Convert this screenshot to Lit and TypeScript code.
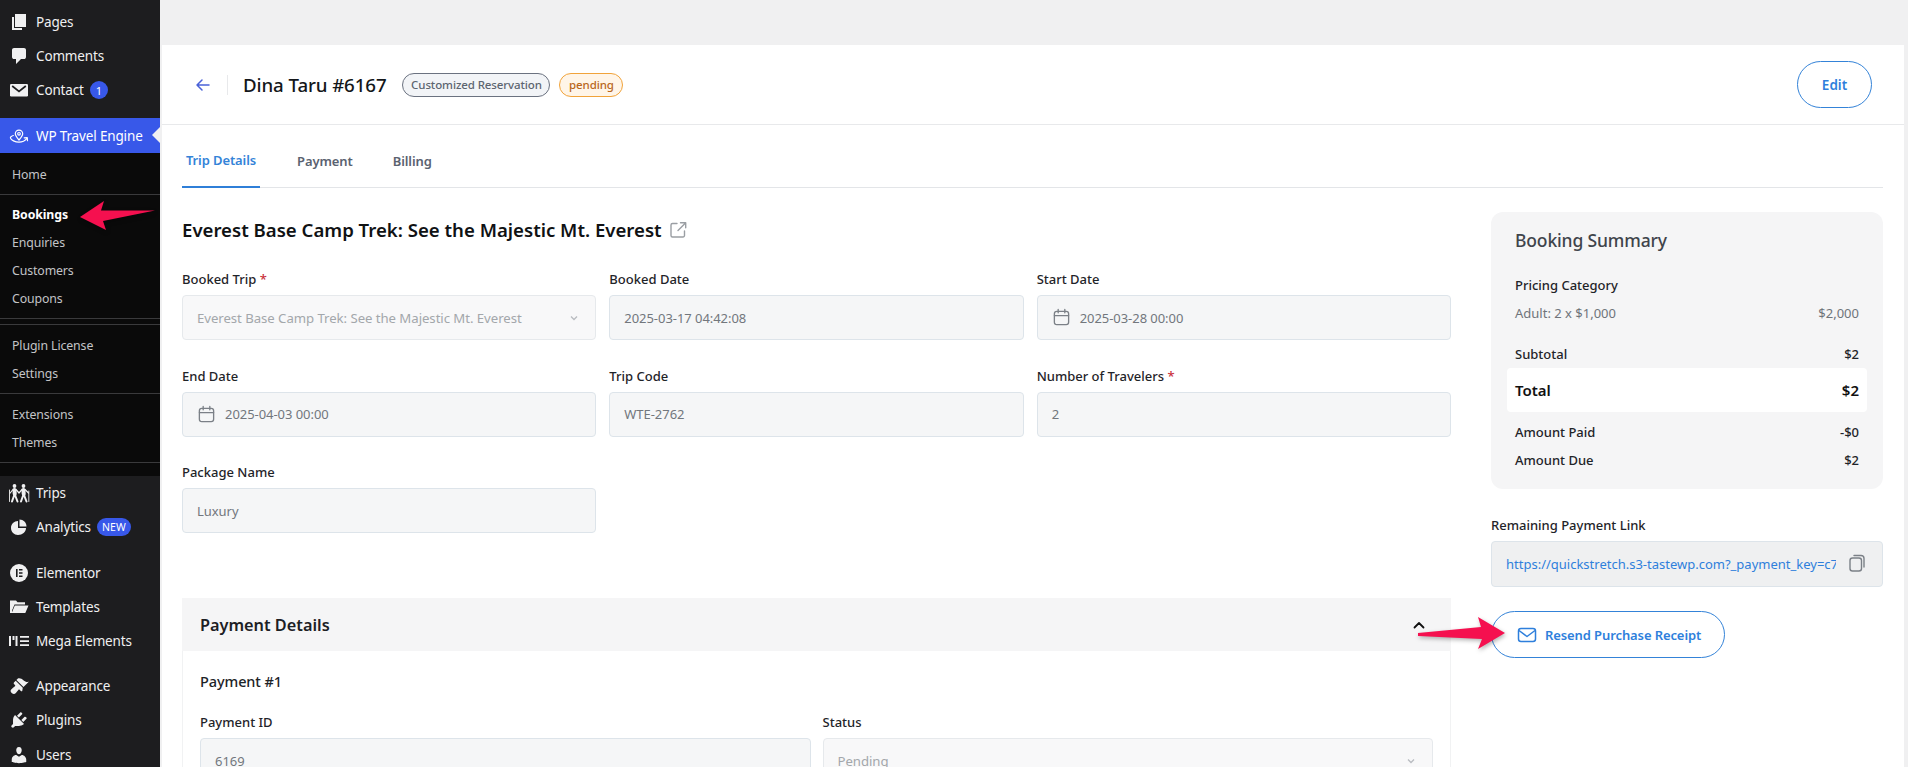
import { LitElement, html, css, svg } from "lit";
import { customElement } from "lit/decorators.js";

const ic = (d: string) => html`<svg class="wp" viewBox="0 0 20 20"><path fill="currentColor" d=${d}></path></svg>`;
const I = {
  pages: ic("M6 15V2h11v13H6zm-1 1h8v2H3V5h2v11z"),
  comments: ic("M5 2h10q.82 0 1.41.59T17 4v7q0 .82-.59 1.41T15 13h-3l-5 5v-5H5q-.82 0-1.41-.59T3 11V4q0-.82.59-1.41T5 2z"),
  mail: html`<svg class="wp" viewBox="0 0 20 20"><rect x="1" y="4" width="18" height="12.5" rx="1.2" fill="currentColor"></rect><path d="M3.2 6l6.8 5.4L16.8 6" fill="none" stroke="#1d1d1f" stroke-width="1.7"></path></svg>`,
  wte: html`<svg class="wp wte" viewBox="0 0 20 20" fill="none" stroke="currentColor" stroke-width="1.2" stroke-linecap="round" stroke-linejoin="round"><path d="M10 14c-2.200-2.500-3.700-4.200-3.700-6.200a3.700 3.700 0 017.400 0c0 2-1.500 3.700-3.700 6.200z"></path><circle cx="10" cy="7.800" r="1.300"></circle><path d="M4.300 9.500c-2 .8-3.300 1.500-2.800 2.600.7 2 4.500 4 8.500 4 3 0 6-1.300 8-3.800"></path><path d="M15.200 11.800l3-.2.300 3"></path></svg>`,
  trips: html`<svg class="wp trips" viewBox="0 0 22 20" fill="none" stroke="currentColor" stroke-linecap="round" stroke-linejoin="round"><circle cx="6.500" cy="3" r="1.900" fill="currentColor" stroke="none"></circle><circle cx="15.500" cy="3" r="1.900" fill="currentColor" stroke="none"></circle><path stroke-width="4" d="M6.500 7l.2 4M15.500 7l.2 4"></path><path stroke-width="2" d="M6.300 12l-2.300 6.500M7 12l2.500 6.500M15.300 12l-2.300 6.500M16 12l2.500 6.500"></path><path stroke-width="1.200" d="M5 6.500L2.200 10M8 6.500l3 3.500M14 6.500l-3 3.500M17 6.500l3.500 3.500"></path><path stroke-width=".9" d="M1.500 7V18.500M20.800 8V18.500"></path></svg>`,
  pie: ic("M10.500 9.500V2.500c3.870 0 7 3.130 7 7h-7zM9 4v7h8c0 3.870-3.630 7-8 7-3.870 0-7-3.130-7-7s3.130-7 7-7z"),
  elementor: html`<svg class="wp" viewBox="0 0 20 20"><circle cx="10" cy="10" r="9" fill="currentColor"></circle><path fill="#1d1d1f" d="M7 6h1.600v8H7zM10 6h3.500v1.500H10zM10 9.200h3.500v1.600H10zM10 12.500h3.500V14H10z"></path></svg>`,
  folder: ic("M1 3.500h6l1.500 1.800h7.500v2.200H5.500L3 13.500V16H1zM5.800 8.500H19.500l-3.200 7.500H2.700z"),
  mega: html`<svg class="wp mega" viewBox="0 0 22 14"><path fill="currentColor" d="M1 2h2v10H1zM4.500 2H6.500v4H4.500zM7.500 2H9.500v10H7.500zM12 2h9v1.800h-9zM12 6.200h9V8h-9zM12 10.200h9V12h-9z"></path></svg>`,
  brush: ic("M14.480 11.060L7.410 3.990l1.500-1.500c.5-.56 2.300-.47 3.510.32 1.210.8 1.430 1.280 2.910 2.100 1.180.64 2.450 1.260 4.450.85zm-.71.71L6.700 4.700 4.930 6.470c-.39.39-.39 1.020 0 1.410l1.060 1.060c.39.39.39 1.030 0 1.420-.6.6-1.430 1.110-2.210 1.690-.35.26-.7.53-1.010.84C1.430 13.710.96 15.180 2.670 16.890s3.180 1.230 4.170.23c.31-.31.58-.66.84-1.010.58-.78 1.090-1.610 1.690-2.210.39-.39 1.030-.39 1.420 0l1.060 1.060c.39.39 1.020.39 1.410 0z"),
  plug: ic("M13.110 4.360L9.870 7.600 8 5.730l3.240-3.240c.35-.34 1.050-.2 1.560.32.52.51.66 1.210.31 1.550zm-8 1.770l.91-1.120 9.010 9.010-1.190.84c-.71.71-2.630 1.160-3.820 1.160H6.140L4.900 17.260c-.59.59-1.540.59-2.120 0-.59-.58-.59-1.530 0-2.120l1.240-1.240v-3.880c0-1.130.4-3.190 1.090-3.890zm7.260 3.970l3.240-3.240c.34-.35 1.040-.21 1.550.31.52.51.66 1.210.31 1.550l-3.240 3.250z"),
  users: ic("M10 9.250c-2.270 0-2.730-3.440-2.730-3.440C7 4.020 7.820 2 9.970 2c2.160 0 2.980 2.020 2.710 3.810 0 0-.41 3.440-2.680 3.440zm0 2.570L12.720 10c2.390 0 4.520 2.330 4.520 4.530v2.490s-3.650 1.130-7.240 1.130c-3.650 0-7.240-1.130-7.240-1.130v-2.490c0-2.250 1.940-4.480 4.470-4.480z"),
};

const calendar = html`<svg class="cal" viewBox="0 0 20 20" fill="none" stroke="#7b8087" stroke-width="1.400" stroke-linecap="round" stroke-linejoin="round"><rect x="2.500" y="3.500" width="15" height="14" rx="2.500"></rect><path d="M2.500 8h15M6.500 1.500v3.500M13.500 1.500v3.500"></path></svg>`;
const chevDown = html`<svg class="chev" viewBox="0 0 12 12" fill="none" stroke="#b9bcc0" stroke-width="1.300"><path d="M3 4.500l3 3 3-3"></path></svg>`;

@customElement("app-root")
export class AppRoot extends LitElement {
  static styles = css`
    :host { display: block; height: 767px; overflow: hidden; position: relative; font-family: "Noto Sans", "Open Sans", sans-serif; background: #f0f0f1; color: #1d2327; }
    * { box-sizing: border-box; }
    .page { display: grid; grid-template-columns: 160px 1fr; height: 767px; }

    .side { background: #1d1d1f; color: #f0f0f1; padding-top: 5px; font-size: 13.500px; letter-spacing: -0.15px; overflow: hidden; }
    .row { display: flex; align-items: center; height: 34px; position: relative; }
    .row .ico { width: 36px; flex: none; display: flex; justify-content: center; padding-left: 1px; }
    .wp { width: 20px; height: 20px; display: block; }
    .wp.trips { width: 22px; }
    .wp.mega { width: 22px; height: 14px; }
    .gap-t { margin-top: 11px; }
    .gap-e { margin-top: 12px; }
    .gap-u { margin-top: 1px; }
    .active { background: #3858e9; color: #fff; height: 35px; }
    .active::after { content: ""; position: absolute; right: 0; top: 9px; border: 8.500px solid transparent; border-right-color: #f0f0f1; border-left-width: 0; }
    .badge { margin-left: 6px; width: 18px; height: 18px; border-radius: 50%; background: #3858e9; color: #fff; font-size: 11px; display: flex; align-items: center; justify-content: center; }
    .new { margin-left: 6px; width: 34px; height: 18px; border-radius: 9px; background: #3858e9; color: #fff; font-size: 10.500px; display: flex; align-items: center; justify-content: center; letter-spacing: 0; }
    .sub { background: #0a0a0a; height: 323px; padding-top: 7px; font-size: 12.300px; color: #c3c4c7; letter-spacing: -0.1px; }
    .sub a { display: flex; align-items: center; height: 28px; padding-left: 12px; }
    .sub a.cur { color: #fff; font-weight: 700; }
    .sub hr { border: 0; height: 1px; background: #3a3a3c; margin: 6px 0; }
    .sub hr.a { margin: 6px 0 5px; }
    .sub hr.c { margin: 0 0 6px; }

    .main { padding: 45px 4px 0 2px; min-width: 0; }
    .panel { background: #fff; height: 722px; overflow: hidden; }
    .head { height: 80px; border-bottom: 1px solid #e8e9eb; display: flex; align-items: center; padding: 0 32px 0 33px; }
    .back { width: 16px; height: 16px; color: #4a62d8; display: block; }
    .vr { width: 1px; height: 20px; background: #e8e9eb; margin: 0 15px 0 16px; }
    h1 { font-size: 18.700px; font-weight: 500; margin: 0; color: #14171a; letter-spacing: -0.1px; }
    .pill { height: 24px; border-radius: 12px; font-size: 11.500px; font-weight: 500; display: flex; align-items: center; justify-content: center; letter-spacing: -0.1px; }
    .pill.grey { width: 148px; margin-left: 16px; background: #f2f4f7; border: 1px solid #6b7280; color: #5c6570; }
    .pill.orange { width: 64px; margin-left: 9px; background: #fff5e8; border: 1px solid #f1a33a; color: #b9661b; font-weight: 500; }
    .edit { margin-left: auto; width: 75px; height: 47px; border-radius: 24px; border: 1px solid #3483d8; color: #2e7fdc; font-size: 13.500px; font-weight: 600; display: flex; align-items: center; justify-content: center; }

    .tabs { margin: 0 21px 0 20px; height: 63px; border-bottom: 1px solid #e3e5e8; display: flex; }
    .tab { font-size: 13px; font-weight: 600; color: #5a6270; height: 63px; padding-top: 8px; display: flex; align-items: center; letter-spacing: -0.1px; }
    .tab.on { color: #3483d8; width: 78px; justify-content: center; border-bottom: 2px solid #2f7fd8; margin-right: 37px; }
    .tab.pay { margin-right: 40px; }

    .body { display: grid; grid-template-columns: 1269px 392px; column-gap: 40px; padding-left: 20px; }
    .left { padding-top: 30px; }
    h2 { font-size: 18.600px; line-height: 24px; font-weight: 600; margin: 0 0 27px; color: #101214; display: flex; align-items: center; }
    h2 svg { width: 18px; height: 18px; margin-left: 7px; }
    .form { display: grid; grid-template-columns: repeat(3, 1fr); column-gap: 13px; row-gap: 25.500px; }
    .f label { display: block; height: 20px; line-height: 20px; margin-bottom: 6px; font-size: 13px; font-weight: 500; color: #1f2429; }
    .req { color: #c9303a; }
    .in { height: 45px; background: #f5f6f7; border: 1px solid #dde4ea; border-radius: 4px; display: flex; align-items: center; padding: 0 14px; font-size: 13px; color: #72777d; letter-spacing: -0.05px; }
    .in.sel { background: #f8f8f9; color: #a3a7ab; font-size: 13.200px; border-color: #e6e9ec; }
    .in .chev { margin-left: auto; width: 12px; height: 12px; margin-right: 1px; }
    .cal { width: 19px; height: 19px; margin-right: 9px; flex: none; }

    .acc { margin-top: 65px; border: 1px solid #f1f2f3; border-top: 0; }
    .acc-h { height: 53px; background: #f5f5f6; margin: 0 -1px; padding: 0 24px 0 18px; display: flex; align-items: center; justify-content: space-between; font-size: 16.300px; font-weight: 600; color: #1c2024; }
    .acc-h svg { width: 16px; height: 16px; }
    .acc-b { padding: 19px 17px 0; }
    h3 { font-size: 14.500px; line-height: 22px; font-weight: 500; margin: 0 0 20px; letter-spacing: -0.1px; }
    .two { display: grid; grid-template-columns: 1fr 1fr; column-gap: 12px; }

    .right { padding-top: 24px; }
    .sum { background: #f5f5f6; border-radius: 12px; padding: 16px 24px 19px; font-size: 13px; }
    .sum h4 { font-size: 17.500px; line-height: 24px; font-weight: 500; color: #3f444b; margin: 0 0 23px; letter-spacing: -0.15px; }
    .line { display: flex; justify-content: space-between; align-items: center; height: 20px; font-weight: 500; color: #1f2429; }
    .line.pc { display: block; line-height: 20px; font-weight: 500; margin-bottom: 8px; }
    .line.ad { color: #6f747a; font-weight: 400; margin-bottom: 21px; }
    .line.tot { height: 44px; background: #fff; border-radius: 4px; margin: 4px -8px 10px; padding: 0 8px; font-size: 15px; font-weight: 600; color: #111; }
    .line.pd { margin-bottom: 8px; }
    .rp { margin-top: 26px; height: 20px; line-height: 20px; margin-bottom: 6px; font-size: 13px; font-weight: 500; color: #1f2429; }
    .link { height: 46px; background: #eff0f1; border: 1px solid #dde4ea; border-radius: 4px; display: flex; align-items: center; padding: 0 16px 0 14px; }
    .link span { flex: 1; overflow: hidden; white-space: nowrap; color: #2e7fdc; font-size: 13px; margin-right: 12px; }
    .link svg { width: 18px; height: 18px; flex: none; margin-top: -2px; }
    .resend { margin-top: 24px; width: 234px; height: 47px; border: 1px solid #3483d8; border-radius: 24px; display: flex; align-items: center; padding-left: 25px; gap: 8px; color: #2e7fdc; font-size: 13px; font-weight: 600; letter-spacing: -0.1px; }
    .resend svg { width: 20px; height: 20px; }

    .arrows { position: absolute; left: 0; top: 0; width: 1908px; height: 767px; pointer-events: none; filter: drop-shadow(1px 2px 2px rgba(0,0,0,.3)); }
  `;

  field(label: string, val: unknown, opts: { req?: boolean; sel?: boolean; cal?: boolean } = {}) {
    return html`<div class="f"><label>${label}${opts.req ? html` <span class="req">*</span>` : ""}</label>
      <div class="in ${opts.sel ? "sel" : ""}">${opts.cal ? calendar : ""}${val}${opts.sel ? chevDown : ""}</div></div>`;
  }

  render() {
    return html`<div class="page">
      <nav class="side">
        <div class="row"><div class="ico">${I.pages}</div>Pages</div>
        <div class="row"><div class="ico">${I.comments}</div>Comments</div>
        <div class="row"><div class="ico">${I.mail}</div>Contact<span class="badge">1</span></div>
        <div class="row active gap-t"><div class="ico">${I.wte}</div>WP Travel Engine</div>
        <div class="sub">
          <a>Home</a><hr class="a" />
          <a class="cur">Bookings</a><a>Enquiries</a><a>Customers</a><a>Coupons</a>
          <hr class="a" /><hr class="c" />
          <a>Plugin License</a><a>Settings</a><hr />
          <a>Extensions</a><a>Themes</a><hr />
        </div>
        <div class="row"><div class="ico">${I.trips}</div>Trips</div>
        <div class="row"><div class="ico">${I.pie}</div>Analytics<span class="new">NEW</span></div>
        <div class="row gap-e"><div class="ico">${I.elementor}</div>Elementor</div>
        <div class="row"><div class="ico">${I.folder}</div>Templates</div>
        <div class="row"><div class="ico">${I.mega}</div>Mega Elements</div>
        <div class="row gap-t"><div class="ico">${I.brush}</div>Appearance</div>
        <div class="row"><div class="ico">${I.plug}</div>Plugins</div>
        <div class="row gap-u"><div class="ico">${I.users}</div>Users</div>
      </nav>
      <main class="main"><div class="panel">
        <header class="head">
          <svg class="back" viewBox="0 0 16 16" fill="none" stroke="currentColor" stroke-width="1.500" stroke-linecap="round" stroke-linejoin="round"><path d="M14 8H2.500M7 3L2 8l5 5"></path></svg>
          <span class="vr"></span>
          <h1>Dina Taru #6167</h1>
          <span class="pill grey">Customized Reservation</span>
          <span class="pill orange">pending</span>
          <span class="edit">Edit</span>
        </header>
        <div class="tabs">
          <span class="tab on">Trip Details</span><span class="tab pay">Payment</span><span class="tab">Billing</span>
        </div>
        <div class="body">
          <div class="left">
            <h2>Everest Base Camp Trek: See the Majestic Mt. Everest
              <svg viewBox="0 0 18 18" fill="none" stroke="#9a9ea3" stroke-width="1.400" stroke-linecap="round" stroke-linejoin="round"><path d="M8 2.500H3.500a1.500 1.500 0 00-1.500 1.500v10.500A1.500 1.500 0 003.500 16H14a1.500 1.500 0 001.500-1.500V10M9 9.500L16.500 2M11.500 1.700h5.200v5"></path></svg></h2>
            <div class="form">
              ${this.field("Booked Trip", "Everest Base Camp Trek: See the Majestic Mt. Everest", { req: true, sel: true })}
              ${this.field("Booked Date", "2025-03-17 04:42:08")}
              ${this.field("Start Date", "2025-03-28 00:00", { cal: true })}
              ${this.field("End Date", "2025-04-03 00:00", { cal: true })}
              ${this.field("Trip Code", "WTE-2762")}
              ${this.field("Number of Travelers", "2", { req: true })}
              ${this.field("Package Name", "Luxury")}
            </div>
            <section class="acc">
              <div class="acc-h">Payment Details
                <svg viewBox="0 0 16 16" fill="none" stroke="#111" stroke-width="1.800" stroke-linecap="round" stroke-linejoin="round"><path d="M3.500 10.500L8 6l4.500 4.500"></path></svg>
              </div>
              <div class="acc-b">
                <h3>Payment #1</h3>
                <div class="two">
                  ${this.field("Payment ID", "6169")}
                  ${this.field("Status", "Pending", { sel: true })}
                </div>
              </div>
            </section>
          </div>
          <aside class="right">
            <div class="sum">
              <h4>Booking Summary</h4>
              <div class="line pc">Pricing Category</div>
              <div class="line ad"><span>Adult: 2 x $1,000</span><span>$2,000</span></div>
              <div class="line"><span>Subtotal</span><span>$2</span></div>
              <div class="line tot"><span>Total</span><span>$2</span></div>
              <div class="line pd"><span>Amount Paid</span><span>-$0</span></div>
              <div class="line"><span>Amount Due</span><span>$2</span></div>
            </div>
            <div class="rp">Remaining Payment Link</div>
            <div class="link"><span>https://quickstretch.s3-tastewp.com?_payment_key=c7a91f3e</span>
              <svg viewBox="0 0 18 18" fill="none" stroke="#7b8087" stroke-width="1.400" stroke-linejoin="round"><rect x="2" y="4" width="11.500" height="13" rx="2.500"></rect><path d="M6 1.500h7a3 3 0 013 3V13" stroke-linecap="round"></path></svg>
            </div>
            <div class="resend">
              <svg viewBox="0 0 20 20" fill="none" stroke="currentColor" stroke-width="1.500" stroke-linejoin="round"><rect x="1.500" y="3.500" width="17" height="13" rx="2.500"></rect><path d="M2 5.500l8 6 8-6"></path></svg>
              Resend Purchase Receipt
            </div>
          </aside>
        </div>
      </div></main>
    </div>
    <svg class="arrows" viewBox="0 0 1908 767">
      ${svg`<path fill="#f5104f" d="M155 210.500L101 210.500L104 201L80 217L106 230L103 221Z"></path>
      <path fill="#f5104f" d="M1418 633L1481 627L1478 617L1505 633L1478 649L1482 639L1418 636Z"></path>`}
    </svg>`;
  }
}
